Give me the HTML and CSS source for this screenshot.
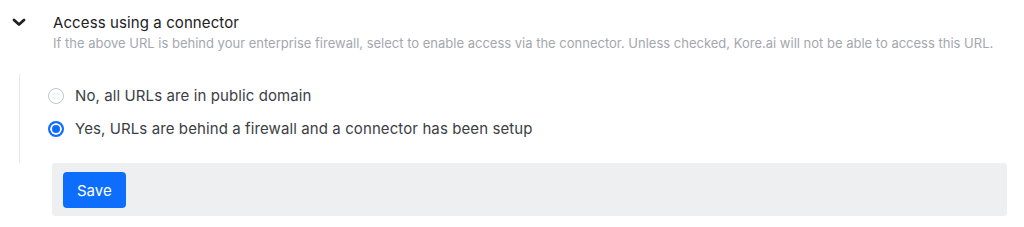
FILE: index.html
```html
<!DOCTYPE html>
<html lang="en">
<head>
    <meta charset="UTF-8">
    <meta name="viewport" content="width=device-width, initial-scale=1.0">
    <title>Access using a connector</title>
    <link rel="stylesheet" href="styles.css">
</head>
<body>
    <div class="panel">
        <div class="head">
            <span class="chevron">
                <svg width="14" height="9" viewBox="0 0 14 9">
                    <path d="M2 2 L7 6.5 L12 2" fill="none" stroke="#202124" stroke-width="2.8" stroke-linecap="round" stroke-linejoin="round"/>
                </svg>
            </span>
            <div class="head-text">
                <div class="title">Access using a connector</div>
                <div class="desc">If the above URL is behind your enterprise firewall, select to enable access via the connector. Unless checked, Kore.ai will not be able to access this URL.</div>
            </div>
        </div>

        <div class="options">
            <label class="option">
                <input type="radio" name="connector" value="no">
                <span>No, all URLs are in public domain</span>
            </label>
            <label class="option">
                <input type="radio" name="connector" value="yes" checked>
                <span>Yes, URLs are behind a firewall and a connector has been setup</span>
            </label>
        </div>

        <div class="actions">
            <button type="button" class="save">Save</button>
        </div>
    </div>
</body>
</html>
```

FILE: styles.css
```css
/* base */
body {
    margin: 0;
    background-color: #fff;
    font-family: Inter, "Noto Sans", sans-serif;
    color: #202124;
}
.panel {
    padding-top: 13px;
}
.head {
    display: flex;
}
.chevron {
    width: 53px;
    flex-shrink: 0;
    padding-left: 12px;
    padding-top: 5px;
    box-sizing: border-box;
}
.chevron svg {
    display: block;
}
.title {
    font-size: 15px;
    line-height: 20px;
    letter-spacing: 0.1px;
    color: #202124;
}
.desc {
    margin-top: 2px;
    font-size: 13px;
    line-height: 17px;
    color: #a4a7ae;
}
.options {
    margin-top: 22px;
    margin-left: 19px;
    border-left: 1px solid #e6e7ea;
    padding: 5px 0 18px 28px;
}
.option {
    display: flex;
    align-items: center;
    height: 33px;
    font-size: 15px;
    letter-spacing: 0.1px;
    color: #3b3e44;
    cursor: pointer;
}
.option input {
    appearance: none;
    -webkit-appearance: none;
    width: 16px;
    height: 16px;
    margin: 0 11px 0 0;
    border: 1px solid #c3c6cc;
    border-radius: 50%;
    background-color: #fff;
    flex-shrink: 0;
}
.option input:checked {
    border: 2px solid #0d6efd;
    background-color: #0d6efd;
    box-shadow: inset 0 0 0 2px #fff;
}
.actions {
    margin: 0 17px 0 52px;
    padding: 9px 11px 8px;
    background-color: #eeeff1;
    border-radius: 3px;
}
.save {
    height: 36px;
    padding: 0 14px;
    background-color: #0d6efd;
    border: none;
    border-radius: 4px;
    color: #fff;
    font-family: Inter, "Noto Sans", sans-serif;
    font-size: 15px;
    cursor: pointer;
}
.save:hover {
    background-color: #0b5ed7;
}
```
